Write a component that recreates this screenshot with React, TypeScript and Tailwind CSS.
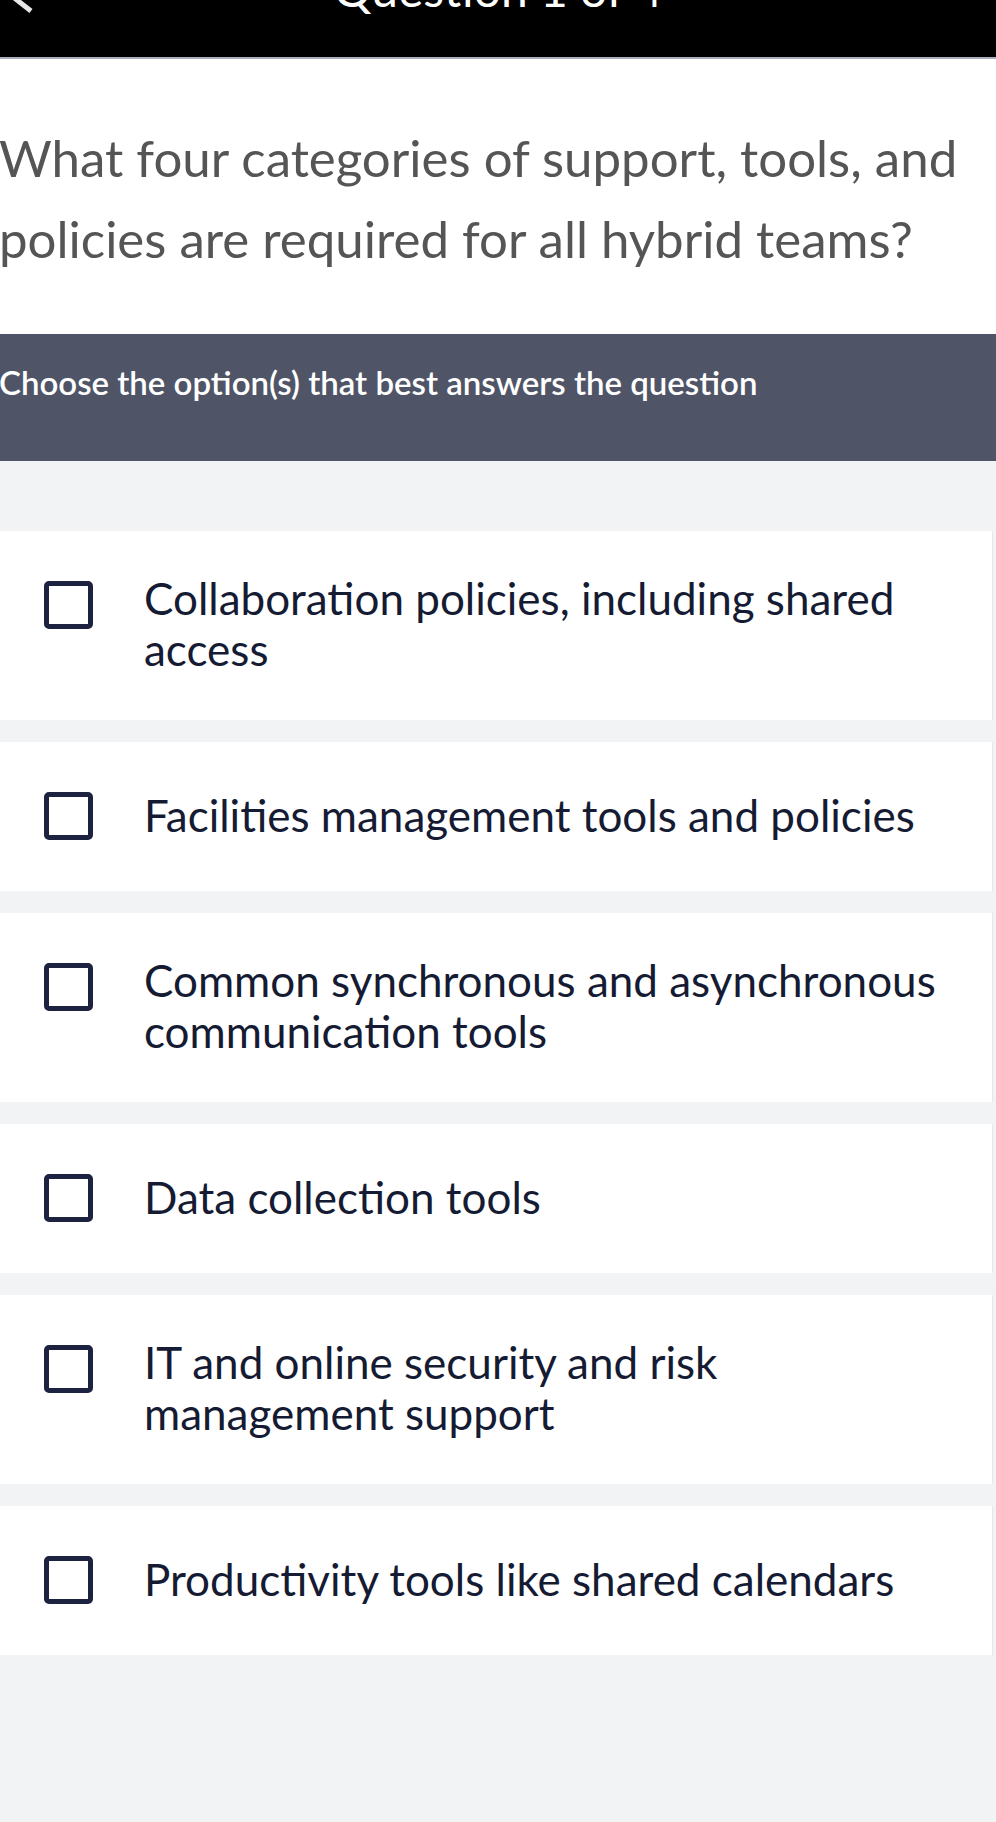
const options = [
  'Collaboration policies, including shared access',
  'Facilities management tools and policies',
  'Common synchronous and asynchronous communication tools',
  'Data collection tools',
  'IT and online security and risk management support',
  'Productivity tools like shared calendars',
]

function Header() {
  return (
    <header className="h-[59px] overflow-hidden border-b-2 border-[#a9b0bd] bg-black">
      <div className="-mt-[35px] grid h-[48px] grid-cols-[1fr_auto_1fr] items-center">
        <svg width="40" height="48" viewBox="0 0 40 48" className="self-start" aria-hidden>
          <polyline points="31,10 8,28 31,46" fill="none" stroke="#e6e6e6" strokeWidth="5" />
        </svg>
        <span className="text-[48px] leading-[48px] text-white">Question 1 of 4</span>
        <span />
      </div>
    </header>
  )
}

function Checkbox() {
  return <span className="mt-[8px] block h-[48px] w-[49px] shrink-0 rounded-[5px] border-[5px] border-[#1c2240] bg-white" />
}

function OptionCard({ label }: { label: string }) {
  return (
    <label className="mr-[3px] flex border-r border-[#e6e8ec] bg-white pt-[42px] pb-[45px] pl-[44px] pr-[30px]">
      <Checkbox />
      <span className="ml-[51px] flex min-h-[62px] items-center text-[44px] leading-[51px] text-[#151b33]">{label}</span>
    </label>
  )
}

export default function App() {
  return (
    <div className="min-h-[1822px] bg-[#f2f3f5] font-['Lato','Noto_Sans',sans-serif]">
      <Header />

      <section className="bg-white pt-[58px] pb-[55px]">
        <h1 className="-ml-[1px] text-[51px] leading-[81px] font-normal text-[#555555]">
          What four categories of support, tools, and policies are required for all hybrid teams?
        </h1>
      </section>

      <div className="h-[127px] bg-[#4f5567] pt-[30px]">
        <p className="-ml-[1px] text-[33px] leading-[36px] font-semibold text-white">
          Choose the option(s) that best answers the question
        </p>
      </div>

      <div className="flex flex-col gap-[22px] pt-[70px] pb-[40px]">
        {options.map((o) => (
          <OptionCard key={o} label={o} />
        ))}
      </div>
    </div>
  )
}
